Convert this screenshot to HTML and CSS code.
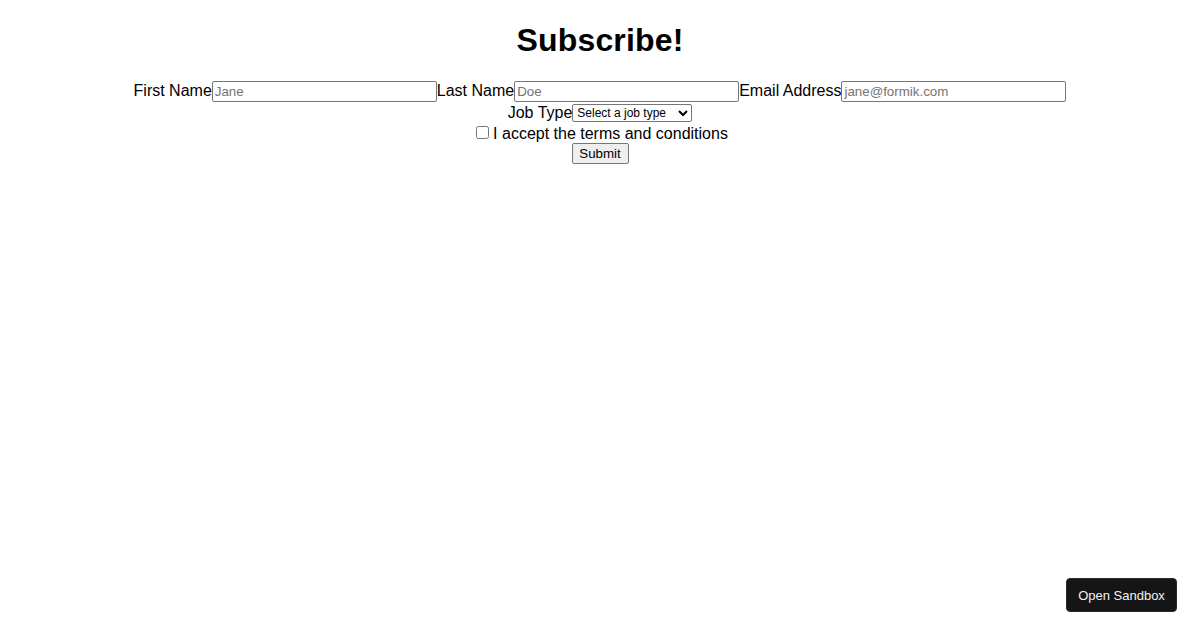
FILE: index.html
```html
<!DOCTYPE html>
<html>
<head>
<meta charset="utf-8">
<link rel="stylesheet" href="styles.css">
</head>
<body>
<h1 class="title">Subscribe!</h1>
<form class="form">
  <div class="row row-names">
    <label class="label" for="firstName">First Name</label><input class="text-input" id="firstName" type="text" placeholder="Jane"><label class="label" for="lastName">Last Name</label><input class="text-input" id="lastName" type="text" placeholder="Doe"><label class="label" for="email">Email Address</label><input class="text-input" id="email" type="email" placeholder="jane@formik.com">
  </div>
  <div class="row row-job">
    <label class="label" for="jobType">Job Type</label><select class="select" id="jobType"><option>Select a job type</option></select>
  </div>
  <div class="row">
    <label class="label"><input class="checkbox" type="checkbox">I accept the terms and conditions</label>
  </div>
  <div class="row">
    <button class="submit" type="submit">Submit</button>
  </div>
</form>
<a class="sandbox-btn">Open Sandbox</a>
</body>
</html>
```
FILE: styles.css
```css
html, body {
  background: #fff;
}
body {
  margin: 8px;
  font-family: "Liberation Sans", Arial, sans-serif;
  color: #000;
  text-align: center;
}
.title {
  font-size: 32px;
  font-weight: bold;
  margin: 14.44px 0 21.44px;
  letter-spacing: 0.15px;
}
.form {
  font-size: 16px;
}
.row {
  line-height: normal;
}
.row-names {
  margin-bottom: 2px;
}
.row-job {
  margin-bottom: 1px;
}
.text-input {
  width: 225px;
  height: 21px;
  box-sizing: border-box;
  font-family: "Liberation Sans", Arial, sans-serif;
  font-size: 13.33px;
  padding: 1px 2px;
  border: 1px solid #767676;
  border-radius: 2px;
  vertical-align: baseline;
}
.text-input::placeholder {
  color: #757575;
}
.select {
  font-family: "Liberation Sans", Arial, sans-serif;
  font-size: 12px;
  width: 120px;
  height: 18px;
  border: 1px solid #767676;
  border-radius: 2px;
  background: #fff;
  color: #000;
  vertical-align: 1px;
}
.checkbox {
  margin: 3px 4px 3px 4px;
}
.submit {
  font-family: "Liberation Sans", Arial, sans-serif;
  font-size: 13.33px;
  padding: 1px 6px;
  border: 1px solid #767676;
  border-radius: 2px;
  background: #efefef;
  color: #000;
  height: 21px;
  width: 57px;
}
.sandbox-btn {
  position: fixed;
  right: 23px;
  bottom: 18px;
  width: 111px;
  height: 34px;
  box-sizing: border-box;
  display: flex;
  align-items: center;
  justify-content: center;
  background: #151515;
  color: #f2f2f2;
  font-family: "Liberation Sans", Arial, sans-serif;
  font-size: 13px;
  border-radius: 4px;
  border: 1px solid #2a2a2a;
}
```
